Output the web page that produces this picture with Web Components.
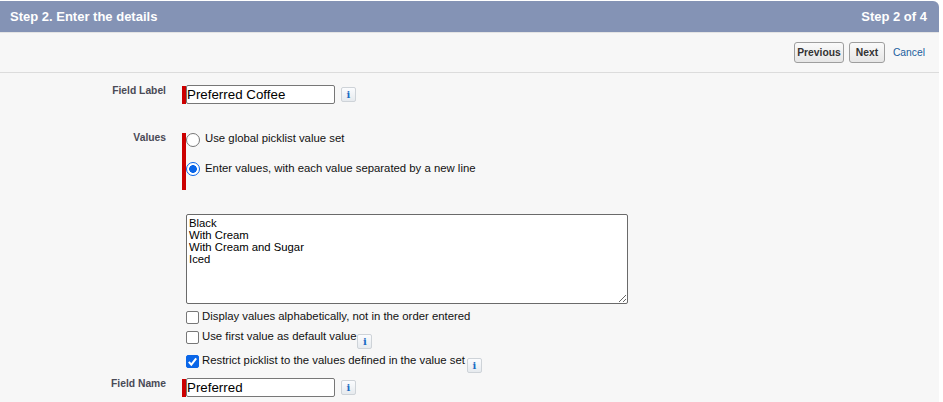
<!DOCTYPE html>
<html><head><meta charset="utf-8"><title>Step 2</title>
<style>html,body{margin:0;padding:0;background:#fff;height:402px;overflow:hidden;font-family:"Liberation Sans",Arial,sans-serif}</style>
</head><body>
<wizard-page>
  <wizard-header slot="header" title-text="Step 2. Enter the details" step="Step 2 of 4"></wizard-header>
  <wizard-toolbar slot="toolbar"></wizard-toolbar>
  <form-row label="Field Label" style="height:60px;padding-top:12px">
    <text-field value="Preferred Coffee"></text-field>
  </form-row>
  <form-row label="Values" label-shift="-1" style="height:81px;padding-top:0">
    <values-group></values-group>
  </form-row>
  <value-area></value-area>
  <check-row top="7" text="Display values alphabetically, not in the order entered"></check-row>
  <check-row top="6" text="Use first value as default value" info></check-row>
  <check-row top="10" text="Restrict picklist to the values defined in the value set" info gap="2" checked></check-row>
  <form-row label="Field Name" style="padding-top:9px">
    <text-field value="Preferred"></text-field>
  </form-row>
</wizard-page>
<script>
function def(name, html){
  customElements.define(name, class extends HTMLElement{
    connectedCallback(){
      if(this.shadowRoot) return;
      const r=this.attachShadow({mode:'open'});
      r.innerHTML=typeof html==='function'?html(this):html;
    }
  });
}
def('info-button',`<style>
:host{display:inline-flex;width:15px;height:15px;box-sizing:border-box;align-items:center;justify-content:center;border:1px solid #ced3d8;border-radius:2px;background:linear-gradient(#fbfcfe,#e6eaee);color:#1a6cc4;font:bold 10px "DejaVu Serif","Liberation Serif",serif;line-height:1}
</style>i`);
def('wizard-page',`<style>
:host{display:block;width:939px;height:402px;margin-top:1px;background:#f7f7f7;overflow:hidden;border-top-right-radius:6px}
</style><slot name="header"></slot><slot name="toolbar"></slot><slot></slot>`);
def('wizard-header',h=>`<style>
:host{display:flex;justify-content:space-between;align-items:center;height:31px;background:#8493b5;color:#fff;font:bold 13px "Liberation Sans",Arial,sans-serif;padding:0 12px 0 10px;box-sizing:border-box}
</style><span>${h.getAttribute('title-text')}</span><span>${h.getAttribute('step')}</span>`);
def('wizard-toolbar',`<style>
:host{display:flex;justify-content:flex-end;align-items:center;height:41px;box-sizing:border-box;border-top:1px solid #e4e4e4;border-bottom:1px solid #dcdcdc;padding:0 14px 0 0;gap:5px}
button{font:bold 10.3px "Liberation Sans",Arial,sans-serif;color:#333;height:21px;border:1px solid #9e9e9e;border-radius:3px;background:linear-gradient(#fafafa,#e6e6e6);padding:0;box-sizing:border-box}
a{font:10.3px "Liberation Sans",Arial,sans-serif;color:#1b5f9e;margin-left:3px;text-decoration:none}
</style><button style="width:50px">Previous</button><button style="width:36px">Next</button><a href="#">Cancel</a>`);
def('form-row',h=>`<style>
:host{display:grid;grid-template-columns:166px 1fr;column-gap:16px;box-sizing:border-box}
.l{text-align:right;font:bold 10.3px "Liberation Sans",Arial,sans-serif;color:#4a4a56;margin-top:${h.getAttribute('label-shift')||0}px}
</style><div class="l">${h.getAttribute('label')}</div><div><slot></slot></div>`);
def('text-field',h=>`<style>
:host{display:flex;align-items:center;gap:6px}
.b{width:3.5px;height:18px;background:#c00;margin-right:0.5px}
.w{display:flex;align-items:center}
input{width:149px;height:19px;box-sizing:border-box;border:1px solid #777;border-radius:2px;background:#fff;font:13.33px "Liberation Sans",Arial,sans-serif;color:#000;padding:0;outline:0}
</style><span class="w"><span class="b"></span><input value="${h.getAttribute('value')}"></span><info-button></info-button>`);
def('values-group',`<style>
:host{display:flex}
.b{width:3.5px;height:57px;background:#c00;margin-right:0.5px}
.o{display:flex;align-items:flex-start;gap:5px;font:11.35px/14px "Liberation Sans",Arial,sans-serif;color:#111;height:29px}
.o span{margin-top:-2px}
.o.second span{margin-top:-1px}
input{appearance:none;margin:0;width:14px;height:14px;border-radius:50%;border:1px solid #777;background:#fff;box-sizing:border-box;flex:none}
input:checked{border:1.5px solid #0a66e8;background:radial-gradient(circle,#0a66e8 0 3.6px,#fff 4.1px)}
</style><div class="b"></div><div><label class="o"><input type="radio" name="v"><span>Use global picklist value set</span></label>
<label class="o second"><input type="radio" name="v" checked><span>Enter values, with each value separated by a new line</span></label></div>`);
def('value-area',`<style>
:host{display:block;padding-left:186px;height:90px}
textarea{display:block;width:442px;height:90px;box-sizing:border-box;border:1px solid #6a6a6a;border-radius:2px;background:#fff;font:11.3px/12px "Liberation Sans",Arial,sans-serif;color:#000;padding:2px 2px;margin:0;outline:0;overflow:hidden}
</style><textarea>Black
With Cream
With Cream and Sugar
Iced</textarea>`);
def('check-row',h=>`<style>
:host{display:flex;align-items:flex-start;padding-left:186px;font:11.35px/14px "Liberation Sans",Arial,sans-serif;color:#111;padding-top:${h.getAttribute('top')}px;height:14px}
.t{margin-left:3px;margin-top:-2px}
input{appearance:none;display:block;margin:0;width:13px;height:13px;border-radius:2px;border:1px solid #777;background:#fff;box-sizing:border-box}
input:checked{background:#0a66e8;border-color:#0a66e8}
.c{width:13px;height:13px;position:relative;flex:none}
.c svg{position:absolute;left:0;top:0;pointer-events:none}
info-button{margin-top:3px;margin-left:${h.getAttribute('gap')||1}px}
</style><span class="c"><input type="checkbox" ${h.hasAttribute('checked')?'checked':''}>${h.hasAttribute('checked')?'<svg width="13" height="13" viewBox="0 0 13 13"><path d="M2.8 6.8 5.3 9.6 10.2 3.4" fill="none" stroke="#fff" stroke-width="2"/></svg>':''}</span><span class="t">${h.getAttribute('text')}</span>${h.hasAttribute('info')?'<info-button></info-button>':''}`);
</script>
</body></html>
